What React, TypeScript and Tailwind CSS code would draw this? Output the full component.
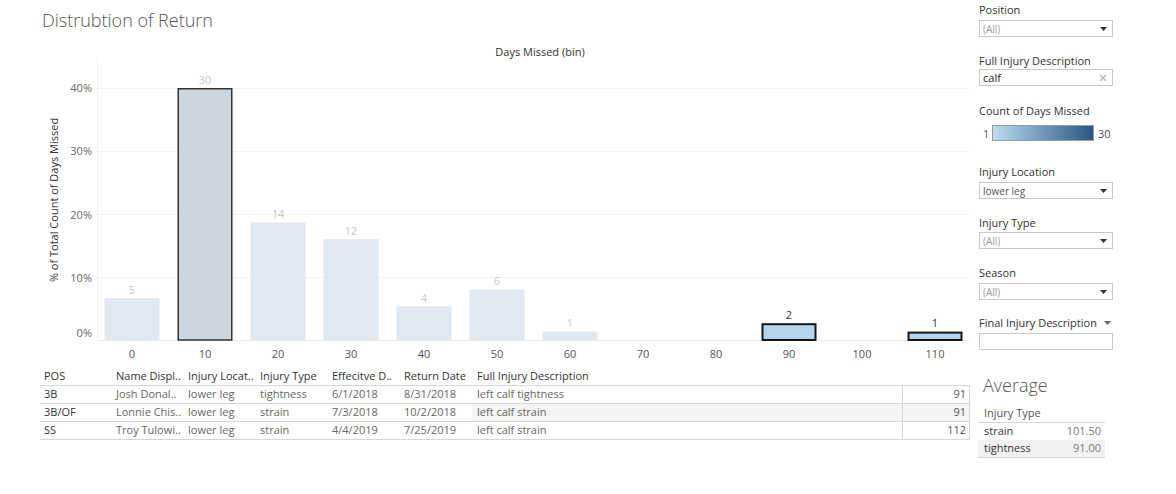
import React from "react";

type Bin = { l: string; c: number; s: "f" | "sel" | "hi" };

const bins: Bin[] = [
  { l: "0", c: 5, s: "f" },
  { l: "10", c: 30, s: "sel" },
  { l: "20", c: 14, s: "f" },
  { l: "30", c: 12, s: "f" },
  { l: "40", c: 4, s: "f" },
  { l: "50", c: 6, s: "f" },
  { l: "60", c: 1, s: "f" },
  { l: "70", c: 0, s: "f" },
  { l: "80", c: 0, s: "f" },
  { l: "90", c: 2, s: "hi" },
  { l: "100", c: 0, s: "f" },
  { l: "110", c: 1, s: "hi" },
];

function Chart() {
  const base = 300;
  return (
    <svg width={979} height={328} className="block" fontSize={11}>
      <text x={540} y={11} textAnchor="middle" dominantBaseline="central" fill="#333">
        Days Missed (bin)
      </text>
      <line x1={97.5} y1={18} x2={97.5} y2={300} stroke="#f0f0f0" />
      {[48, 111, 174, 237].map((y) => (
        <line key={y} x1={98} y1={y + 0.5} x2={970} y2={y + 0.5} stroke="#f3f3f3" />
      ))}
      <line x1={98} y1={300.5} x2={970} y2={300.5} stroke="#ececec" />
      {[
        ["40%", 47],
        ["30%", 110],
        ["20%", 174],
        ["10%", 237],
        ["0%", 292],
      ].map(([t, y]) => (
        <text key={t as string} x={92} y={y as number} textAnchor="end" dominantBaseline="central" fill="#666">
          {t}
        </text>
      ))}
      <text
        x={53}
        y={160}
        textAnchor="middle"
        dominantBaseline="central"
        fill="#333"
        transform="rotate(-90 53 160)"
      >
        % of Total Count of Days Missed
      </text>
      {bins.map((b, i) => {
        const x = 104.5 + 73 * i;
        const h = b.c * 8.4;
        const top = base - h;
        const cx = x + 27.5;
        return (
          <g key={b.l}>
            {b.c > 0 && (
              <>
                {b.s === "f" && <rect x={x} y={top} width={55} height={h} fill="#e2e8ef" />}
                {b.s === "sel" && (
                  <rect x={x + 0.75} y={top + 0.75} width={53.5} height={h - 0.75} fill="#cdd5de" stroke="#333" strokeWidth={1.5} />
                )}
                {b.s === "hi" && (
                  <rect x={x + 1} y={top + 1} width={53} height={h - 1} fill="#b3d6ed" stroke="#151515" strokeWidth={2} />
                )}
                <text
                  x={cx}
                  y={top - 9}
                  textAnchor="middle"
                  dominantBaseline="central"
                  fill={b.s === "hi" ? "#333" : "#c8c8c8"}
                >
                  {b.c}
                </text>
              </>
            )}
            <text x={cx} y={313} textAnchor="middle" dominantBaseline="central" fill="#555">
              {b.l}
            </text>
          </g>
        );
      })}
    </svg>
  );
}

const rows = [
  ["3B", "Josh Donal..", "lower leg", "tightness", "6/1/2018", "8/31/2018", "left calf tightness", "91"],
  ["3B/OF", "Lonnie Chis..", "lower leg", "strain", "7/3/2018", "10/2/2018", "left calf strain", "91"],
  ["SS", "Troy Tulowi..", "lower leg", "strain", "4/4/2019", "7/25/2019", "left calf strain", "112"],
];

const heads = ["POS", "Name Displ..", "Injury Locat..", "Injury Type", "Effecitve D..", "Return Date"];

function DataTable() {
  return (
    <div className="ml-[40px] w-[930px] text-[11px]">
      <div className="flex h-[18px] items-center border-b border-[#d6d6d6] text-[#333]">
        {heads.map((h) => (
          <div key={h} className="w-[72px] shrink-0 whitespace-nowrap pl-[4px]">
            {h}
          </div>
        ))}
        <div className="pl-[5px] whitespace-nowrap">Full Injury Description</div>
      </div>
      {rows.map((r, ri) => (
        <div key={ri} className="flex h-[18px] border-b border-[#d6d6d6]">
          {r.slice(0, 6).map((c, ci) => (
            <div
              key={ci}
              className={`flex w-[72px] shrink-0 items-center whitespace-nowrap pl-[4px] ${ci === 0 ? "text-[#333]" : "text-[#666]"}`}
            >
              {c}
            </div>
          ))}
          <div
            className={`flex w-[430px] shrink-0 items-center pl-[5px] text-[#666] ${ri === 1 ? "bg-[#f4f4f4]" : ""}`}
          >
            {r[6]}
          </div>
          <div
            className={`flex w-[68px] shrink-0 items-center justify-end border-x border-[#d6d6d6] pr-[3px] text-[#555] ${ri === 1 ? "bg-[#f4f4f4]" : ""}`}
          >
            {r[7]}
          </div>
        </div>
      ))}
    </div>
  );
}

function Arrow() {
  return (
    <svg width={7} height={4} viewBox="0 0 7 4" className="block">
      <path d="M0 0 L7 0 L3.5 4 Z" fill="#333" />
    </svg>
  );
}

function Dropdown({ value, dark }: { value: string; dark?: boolean }) {
  return (
    <div className="flex h-[17px] w-[134px] items-center justify-between border border-[#c8c8c8] pl-[3px] pr-[5px]">
      <span className={`text-[10px] leading-none ${dark ? "text-[#555]" : "text-[#9a9a9a]"}`}>{value}</span>
      <Arrow />
    </div>
  );
}

function Label({ children, className }: { children: React.ReactNode; className: string }) {
  return <div className={`h-[14px] text-[11px] leading-[14px] text-[#333] whitespace-nowrap ${className}`}>{children}</div>;
}

function Panel() {
  return (
    <div className="flex w-[197px] flex-col">
      <Label className="mt-[3px]">Position</Label>
      <div className="mt-[3px]">
        <Dropdown value="(All)" />
      </div>

      <Label className="mt-[17px]">Full Injury Description</Label>
      <div className="mt-[1px] flex h-[17px] w-[134px] items-center justify-between border border-[#c8c8c8] pl-[3px] pr-[5px]">
        <span className="text-[11px] leading-none text-[#222]">calf</span>
        <svg width={8} height={8} viewBox="0 0 8 8" className="block">
          <path d="M1 1 L7 7 M7 1 L1 7" stroke="#b0b0b0" strokeWidth={1.1} />
        </svg>
      </div>

      <Label className="mt-[18px]">Count of Days Missed</Label>
      <div className="mt-[7px] flex h-[16px] items-center">
        <span className="w-[13px] pl-[4px] text-[11px] leading-none text-[#555]">1</span>
        <div className="h-[16px] w-[102px] border border-[#9a9a9a] bg-gradient-to-r from-[#b9ddf1] to-[#2a5783]" />
        <span className="pl-[4px] text-[11px] leading-none text-[#555]">30</span>
      </div>

      <Label className="mt-[24px]">Injury Location</Label>
      <div className="mt-[3px]">
        <Dropdown value="lower leg" dark />
      </div>

      <Label className="mt-[17px]">Injury Type</Label>
      <div className="mt-[2px]">
        <Dropdown value="(All)" />
      </div>

      <Label className="mt-[17px]">Season</Label>
      <div className="mt-[3px]">
        <Dropdown value="(All)" />
      </div>

      <div className="mt-[16px] flex h-[14px] w-[134px] items-center justify-between pr-[2px]">
        <span className="text-[11px] leading-[14px] text-[#333]">Final Injury Description</span>
        <svg width={7} height={4} viewBox="0 0 7 4" className="block">
          <path d="M0 0 L7 0 L3.5 4 Z" fill="#666" />
        </svg>
      </div>
      <div className="mt-[3px] h-[17px] w-[134px] border border-[#c8c8c8]" />

      <div className="mt-[23px] h-[24px] pl-[4px] text-[18px] font-light leading-[24px] text-[#555]">Average</div>

      <div className="mt-[8px] -ml-[1px] w-[127px] text-[11px]">
        <div className="flex h-[18px] items-center border-b border-[#d6d6d6] pl-[6px] text-[#555]">Injury Type</div>
        <div className="flex h-[17px] items-center justify-between pl-[6px] pr-[4px]">
          <span className="text-[#333]">strain</span>
          <span className="text-[#777]">101.50</span>
        </div>
        <div className="flex h-[18px] items-center justify-between border-b border-[#d6d6d6] bg-[#f2f2f2] pl-[6px] pr-[4px]">
          <span className="text-[#333]">tightness</span>
          <span className="text-[#777]">91.00</span>
        </div>
      </div>
    </div>
  );
}

export default function App() {
  return (
    <div className="flex h-[494px] w-[1176px] overflow-hidden bg-white font-['Open_Sans',sans-serif]">
      <div className="flex w-[979px] shrink-0 flex-col">
        <div className="h-[40px] pl-[42px] pt-[8px] text-[18px] font-light leading-[24px] text-[#555]">
          Distrubtion of Return
        </div>
        <Chart />
        <DataTable />
      </div>
      <Panel />
    </div>
  );
}
